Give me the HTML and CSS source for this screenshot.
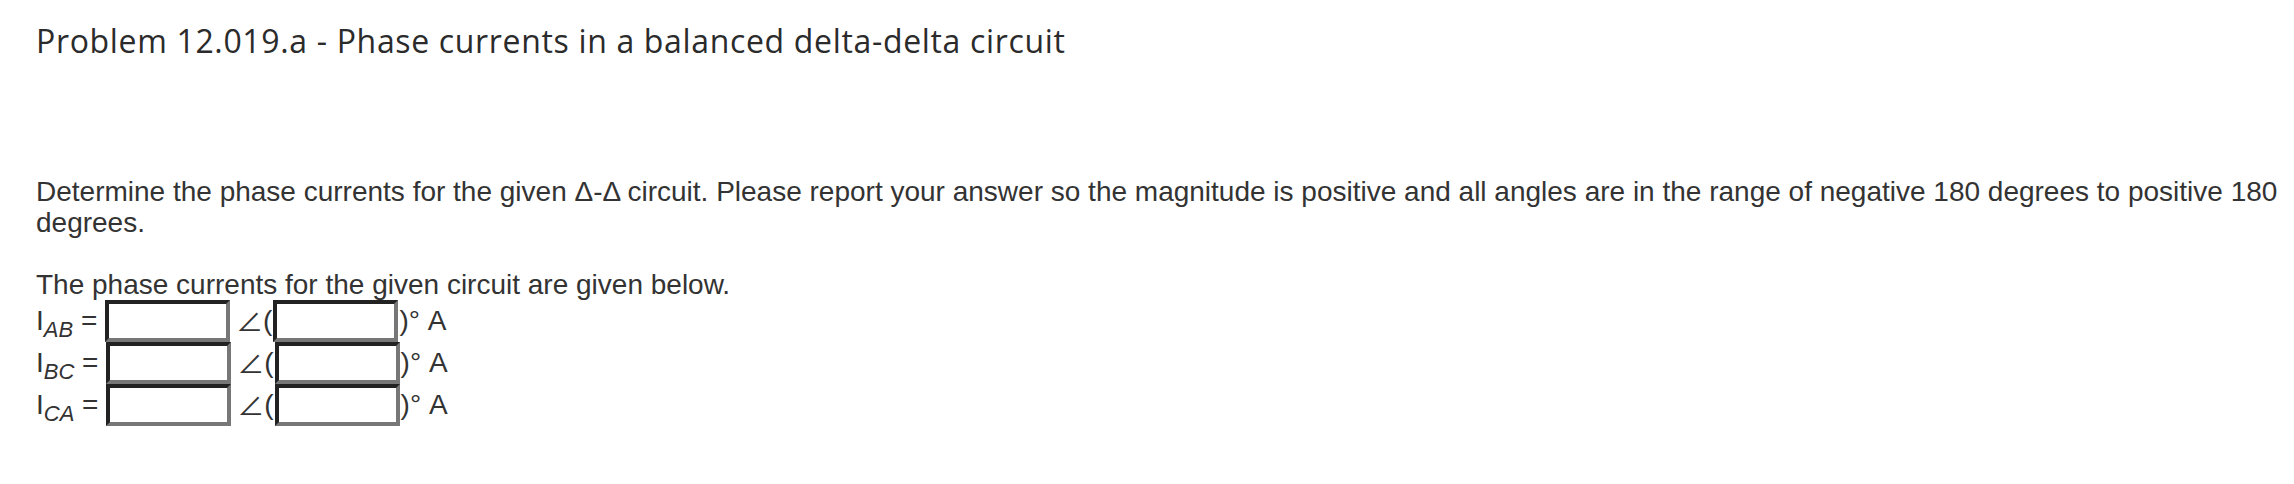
FILE: index.html
```html
<!DOCTYPE html>
<html lang="en">
<head>
<meta charset="utf-8">
<title>Problem 12.019.a</title>
<link rel="stylesheet" href="styles.css">
</head>
<body>
<div class="page">
  <h1 class="title">Problem 12.019.a - Phase currents in a balanced delta-delta circuit</h1>
  <p class="desc">Determine the phase currents for the given Δ-Δ circuit. Please report your answer so the magnitude is positive and all angles are in the range of negative 180 degrees to positive 180 degrees.</p>
  <p class="lead">The phase currents for the given circuit are given below.</p>
  <div class="rows">
    <div class="row"><span class="sym">I<sub>AB</sub></span>&nbsp;=&nbsp;<input class="box" type="text"><span class="ang">∠</span><span class="par">(</span><input class="box box2" type="text"><span class="unit">)°&nbsp;A</span></div>
    <div class="row"><span class="sym">I<sub>BC</sub></span>&nbsp;=&nbsp;<input class="box" type="text"><span class="ang">∠</span><span class="par">(</span><input class="box box2" type="text"><span class="unit">)°&nbsp;A</span></div>
    <div class="row"><span class="sym">I<sub>CA</sub></span>&nbsp;=&nbsp;<input class="box" type="text"><span class="ang">∠</span><span class="par">(</span><input class="box box2" type="text"><span class="unit">)°&nbsp;A</span></div>
  </div>
</div>
</body>
</html>
```
FILE: styles.css
```css
html, body {
  margin: 0;
  padding: 0;
  background: #ffffff;
}

.page {
  padding: 21px 10px 0 36px;
  color: #333333;
  font-family: "Liberation Sans", Arial, sans-serif;
  font-size: 28px;
}

.title {
  margin: 0;
  font-family: "Open Sans", Lato, sans-serif;
  font-weight: 500;
  font-size: 32px;
  letter-spacing: 0.66px;
  line-height: 40px;
  color: #2b2b2b;
}

.desc {
  margin: 115px 0 0 0;
  line-height: 31px;
}

.lead {
  margin: 32px 0 0 0;
  line-height: 30px;
}

.rows {
  display: flex;
  flex-direction: column;
}

.row {
  display: flex;
  align-items: center;
  height: 42px;
  line-height: 42px;
  white-space: nowrap;
}

.sym sub {
  font-style: italic;
  font-size: 22px;
  vertical-align: -7px;
  line-height: 0;
}

.box {
  box-sizing: border-box;
  width: 125px;
  height: 42px;
  margin: 0;
  padding: 0 4px;
  border-style: solid;
  border-width: 4px;
  border-color: #222222 #777777 #777777 #222222;
  background: #ffffff;
  font-family: "Liberation Sans", Arial, sans-serif;
  font-size: 22px;
}

.ang {
  margin-left: 6px;
  font-family: "Noto Sans CJK JP", "DejaVu Sans", sans-serif;
  font-size: 27px;
  line-height: 42px;
}

.par {
  padding-right: 1px;
}

.unit {
  padding-left: 1px;
}
```
